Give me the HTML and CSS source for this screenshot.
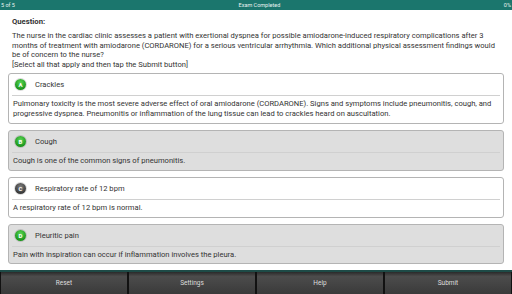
FILE: index.html
```html
<!DOCTYPE html>
<html lang="en">
<head>
    <meta charset="UTF-8">
    <title>Exam Review</title>
    <link rel="stylesheet" href="styles.css">
</head>
<body>
    <div class="screen">
        <div class="top-bar">
            <span>5 of 5</span>
            <span>Exam Completed</span>
            <span>0%</span>
        </div>

        <main class="content">
            <p class="q-title">Question:</p>
            <p class="q-text">The nurse in the cardiac clinic assesses a patient with exertional dyspnea for possible amiodarone-induced respiratory complications after 3 months of treatment with amiodarone (CORDARONE) for a serious ventricular arrhythmia. Which additional physical assessment findings would be of concern to the nurse?</p>
            <p class="q-text">[Select all that apply and then tap the Submit button]</p>

            <div class="answer">
                <div class="answer-head">
                    <span class="badge green">A</span>
                    <span>Crackles</span>
                </div>
                <p class="answer-body">Pulmonary toxicity is the most severe adverse effect of oral amiodarone (CORDARONE). Signs and symptoms include pneumonitis, cough, and progressive dyspnea. Pneumonitis or inflammation of the lung tissue can lead to crackles heard on auscultation.</p>
            </div>

            <div class="answer selected">
                <div class="answer-head">
                    <span class="badge green">B</span>
                    <span>Cough</span>
                </div>
                <p class="answer-body">Cough is one of the common signs of pneumonitis.</p>
            </div>

            <div class="answer">
                <div class="answer-head">
                    <span class="badge grey">C</span>
                    <span>Respiratory rate of 12 bpm</span>
                </div>
                <p class="answer-body">A respiratory rate of 12 bpm is normal.</p>
            </div>

            <div class="answer selected">
                <div class="answer-head">
                    <span class="badge green">D</span>
                    <span>Pleuritic pain</span>
                </div>
                <p class="answer-body">Pain with inspiration can occur if inflammation involves the pleura.</p>
            </div>
        </main>

        <nav class="bottom-bar">
            <button>Reset</button>
            <button>Settings</button>
            <button>Help</button>
            <button>Submit</button>
        </nav>
    </div>
</body>
</html>
```

FILE: styles.css
```css
*{
    padding: 0;
    margin: 0;
    box-sizing: border-box;
    font-family: Roboto, "Liberation Sans", sans-serif;
}

body{
    background-color: white;
}

.screen{
    width: 512px;
    height: 294px;
    display: flex;
    flex-direction: column;
    overflow: hidden;
}

.top-bar{
    height: 10px;
    background-color: #1b766d;
    color: #e8f2f0;
    font-size: 5.5px;
    display: flex;
    justify-content: space-between;
    align-items: center;
    padding: 0 1px;
}

.content{
    flex: 1;
    padding: 7px 8px 0 8px;
    color: #333;
    font-size: 7.6px;
}

.q-title{
    font-weight: bold;
    font-size: 7.7px;
    line-height: 10px;
    padding-left: 4px;
    margin-bottom: 4px;
}
.q-text{
    padding-left: 4px;
    line-height: 9.6px;
}

.answer{
    border: 1px solid #b4b4b4;
    border-radius: 3px;
    background-color: white;
    margin-top: 6px;
    padding: 0 3px;
}
.answer:first-of-type{
    margin-top: 4px;
}
.answer.selected{
    background-color: #dedede;
}

.answer-head{
    display: flex;
    align-items: center;
    gap: 9px;
    height: 22px;
    padding-left: 3px;
    border-bottom: 1px solid #d0d0d0;
}

.badge{
    width: 11px;
    height: 11px;
    border-radius: 50%;
    color: white;
    font-size: 6px;
    font-weight: bold;
    display: flex;
    align-items: center;
    justify-content: center;
    box-shadow: 0 0 0 1px rgba(0, 0, 0, 0.15);
}
.badge.green{
    background: radial-gradient(circle at 50% 35%, #5ad855, #1c951c 70%);
}
.badge.grey{
    background: radial-gradient(circle at 50% 35%, #808080, #383838 70%);
}

.answer-body{
    padding: 3px 0 4px 1px;
    line-height: 9.8px;
}

.bottom-bar{
    height: 24px;
    display: flex;
    border-top: 2px solid #1d4b47;
    background-color: #111;
}
.bottom-bar button{
    flex: 1;
    border: none;
    border-right: 1px solid #111;
    border-left: 1px solid #111;
    background: linear-gradient(to bottom, #2a2a2a, #4c4c4c 20%, #3a3a3a);
    color: #ddd;
    font-size: 6.5px;
}
```
